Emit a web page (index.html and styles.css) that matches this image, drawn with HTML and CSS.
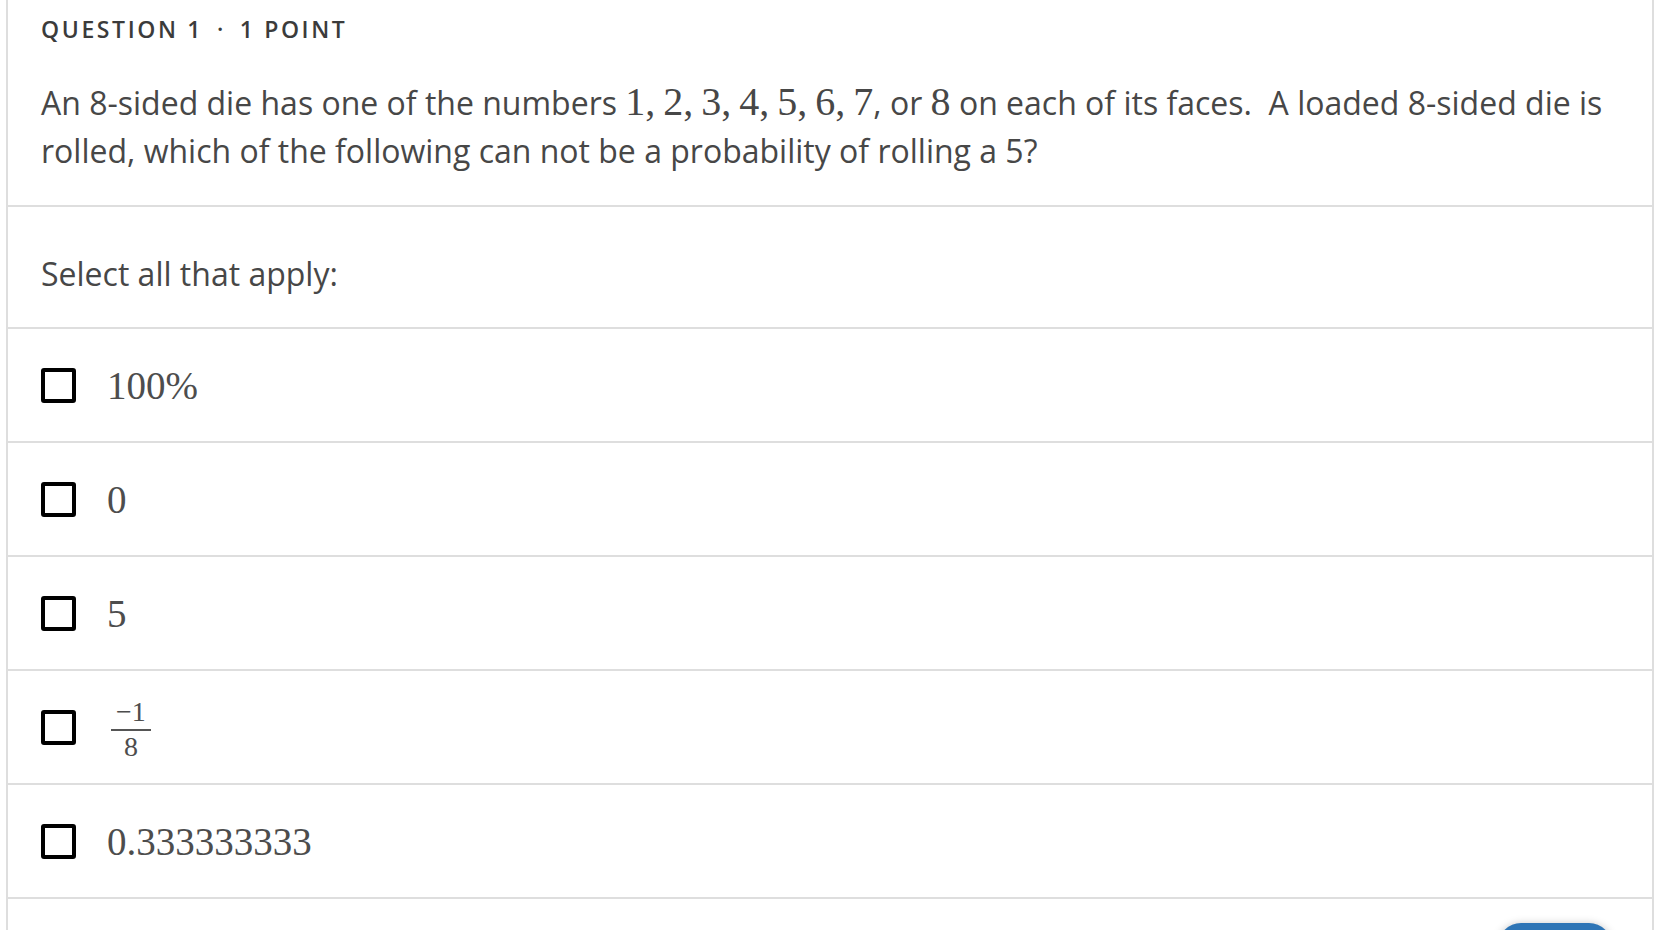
FILE: index.html
```html
<!DOCTYPE html>
<html lang="en">
<head>
    <meta charset="UTF-8">
    <meta name="viewport" content="width=device-width, initial-scale=1.0">
    <title>Question 1</title>
    <link rel="stylesheet" href="styles.css">
</head>
<body>
    <div class="card">
        <div class="q-head">
            <div class="q-label">QUESTION 1<span class="dot">·</span>1 POINT</div>
            <p class="q-text">An 8-sided die has one of the numbers <span class="math">1,&#8201;2,&#8201;3,&#8201;4,&#8201;5,&#8201;6,&#8201;7</span>, or <span class="math">8</span> on each of its faces.&nbsp; A loaded 8-sided die is rolled, which of the following can not be a probability of rolling a 5?</p>
        </div>

        <div class="prompt">Select all that apply:</div>

        <label class="option">
            <span class="box"></span>
            <span class="math answer">100%</span>
        </label>
        <label class="option">
            <span class="box"></span>
            <span class="math answer">0</span>
        </label>
        <label class="option">
            <span class="box"></span>
            <span class="math answer">5</span>
        </label>
        <label class="option">
            <span class="box"></span>
            <span class="frac">
                <span class="num">&minus;1</span>
                <span class="den">8</span>
            </span>
        </label>
        <label class="option">
            <span class="box"></span>
            <span class="math answer">0.333333333</span>
        </label>

        <div class="footer">
            <button class="submit-btn">Submit</button>
        </div>
    </div>
</body>
</html>
```

FILE: styles.css
```css
/* General Styles */
body {
    margin: 0;
    padding: 0;
    font-family: "Open Sans", "Liberation Sans", sans-serif;
    color: #474747;
    background: #fff;
}

.card {
    box-sizing: border-box;
    width: 1648px;
    margin-left: 6px;
    border-left: 2px solid #dedede;
    border-right: 2px solid #dedede;
}

/* Question header */
.q-head {
    padding: 11px 33px 30px;
    border-bottom: 2px solid #dedede;
}

.q-label {
    font-size: 23px;
    font-weight: 600;
    line-height: 36px;
    letter-spacing: 2.6px;
    color: #3b3b3b;
}

.q-label .dot {
    margin: 0 14px;
}

.q-text {
    margin: 32px 0 0;
    font-size: 32px;
    line-height: 48px;
}

.math {
    font-family: "Liberation Serif", "Times New Roman", serif;
    font-size: 40px;
    line-height: 1;
}

/* Answer list */
.prompt {
    box-sizing: border-box;
    height: 122px;
    display: flex;
    align-items: center;
    padding: 13px 33px 0;
    border-bottom: 2px solid #dedede;
    font-size: 32px;
}

.option {
    height: 112px;
    display: flex;
    align-items: center;
    gap: 31px;
    padding: 0 33px;
    border-bottom: 2px solid #dedede;
    cursor: pointer;
}

.box {
    box-sizing: border-box;
    width: 35px;
    height: 35px;
    border: 4px solid #000;
    border-radius: 3px;
    flex-shrink: 0;
}

.answer {
    font-size: 39px;
    color: #4d4d4d;
}

.frac {
    display: inline-flex;
    flex-direction: column;
    margin-left: 4px;
    margin-top: 4px;
    font-family: "Liberation Serif", "Times New Roman", serif;
    font-size: 28px;
    line-height: 1;
    text-align: center;
    color: #4d4d4d;
}

.frac .num {
    padding: 0 5px 3px;
}

.frac .den {
    padding: 2px 5px 0;
    border-top: 2px solid #555;
}

/* Footer */
.footer {
    display: flex;
    justify-content: flex-end;
    padding: 24px 40px;
}

.submit-btn {
    width: 114px;
    height: 46px;
    border: none;
    border-radius: 23px;
    background: #2e75b6;
    color: #fff;
    font-family: "Open Sans", sans-serif;
    font-size: 20px;
    box-shadow: 0 1px 8px rgba(0, 0, 0, 0.25);
}
```
